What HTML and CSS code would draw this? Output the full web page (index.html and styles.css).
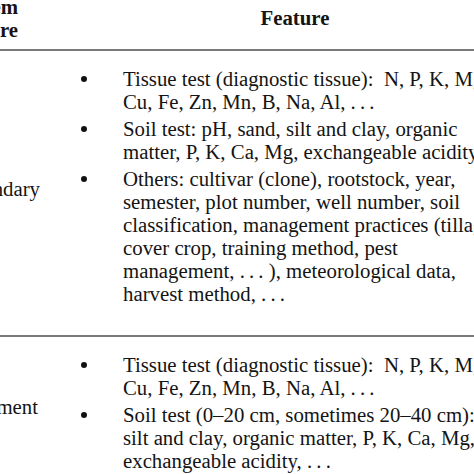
FILE: index.html
```html
<!DOCTYPE html>
<html lang="en">
<head>
<meta charset="utf-8">
<title>Feature table</title>
<link rel="stylesheet" href="styles.css">
</head>
<body>
<div class="table">
  <div class="cell head head-left">System<br>Structure</div>
  <div class="cell head head-right">Feature</div>

  <div class="cell label first-row"><span>Secondary</span></div>
  <div class="cell features first-row">
    <ul class="items">
      <li><span class="dot"></span><span class="text">Tissue test (diagnostic tissue):&ensp;N, P, K, Mg, Ca, S,<br>Cu, Fe, Zn, Mn, B, Na, Al, .&#8201;.&#8201;.</span></li>
      <li><span class="dot"></span><span class="text">Soil test: pH, sand, silt and clay, organic<br>matter, P, K, Ca, Mg, exchangeable acidity, .&#8201;.&#8201;.</span></li>
      <li><span class="dot"></span><span class="text">Others: cultivar (clone), rootstock, year,<br>semester, plot number, well number, soil<br>classification, management practices (tillage,<br>cover crop, training method, pest<br>management, .&#8201;.&#8201;. ), meteorological data,<br>harvest method, .&#8201;.&#8201;.</span></li>
    </ul>
  </div>

  <div class="cell label second-row"><span>Management</span></div>
  <div class="cell features second-row">
    <ul class="items">
      <li><span class="dot"></span><span class="text">Tissue test (diagnostic tissue):&ensp;N, P, K, Mg, Ca, S,<br>Cu, Fe, Zn, Mn, B, Na, Al, .&#8201;.&#8201;.</span></li>
      <li><span class="dot"></span><span class="text">Soil test (0–20 cm, sometimes 20–40 cm):&ensp;sand,<br>silt and clay, organic matter, P, K, Ca, Mg,<br>exchangeable acidity, .&#8201;.&#8201;.</span></li>
    </ul>
  </div>
</div>
</body>
</html>
```
FILE: styles.css
```css
html, body {
  margin: 0;
  padding: 0;
  background: #ffffff;
  overflow: hidden;
}

body {
  width: 474px;
  height: 474px;
  font-family: "Liberation Serif", "Times New Roman", serif;
  font-size: 20.8px;
  line-height: 23px;
  color: #141414;
}

.table {
  display: grid;
  grid-template-columns: 150px 490px;
  margin-left: -100px;
  margin-top: -5.5px;
}

.cell {
  border-bottom: 2px solid #7a7a7a;
}

.head {
  font-weight: bold;
  padding-bottom: 8px;
}

.head-left {
  text-align: right;
  padding-right: 32px;
}

.head-right {
  display: flex;
  align-items: center;
  justify-content: center;
}

.label {
  display: flex;
  align-items: center;
  justify-content: flex-end;
  padding: 22px 10px 30px 0;
  white-space: nowrap;
}

.label.second-row {
  padding: 16px 12px 42px 0;
}

.features {
  padding: 16px 0 30px 0;
}

.items {
  list-style: none;
  margin: 0;
  padding: 0 0 0 31px;
  display: flex;
  flex-direction: column;
  gap: 4px;
}

.items li {
  display: flex;
  align-items: flex-start;
}

.dot {
  flex: none;
  width: 6px;
  height: 6px;
  margin-top: 9px;
  margin-right: 36px;
  border-radius: 50%;
  background: #111111;
}

.text {
  white-space: nowrap;
}
```
